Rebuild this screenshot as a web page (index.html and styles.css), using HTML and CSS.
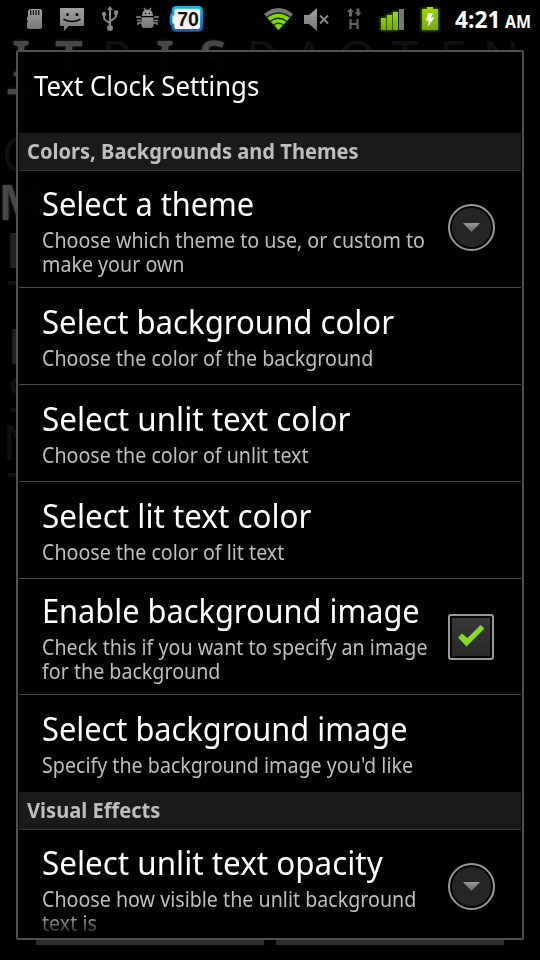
FILE: index.html
```
<!DOCTYPE html>
<html lang="en">
<head>
<meta charset="utf-8">
<title>Text Clock Settings</title>
<link rel="stylesheet" href="styles.css">
</head>
<body>
<div class="screen">
  <div class="wallpaper" aria-hidden="true">
    <div class="letters"><b>I</b><b>T</b><i>R</i><b>I</b><b>S</b><i>P</i><i>A</i><i>O</i><i>T</i><i>E</i><i>N</i></div>
    <div class="letters"><b>T</b><i>W</i><i>E</i><i>N</i><i>T</i><i>Y</i></div>
    <div class="letters"><i>Q</i></div>
    <div class="letters"><b>M</b></div>
    <div class="letters"><b class="dim">P</b></div>
    <div class="letters"><i>T</i></div>
    <div class="letters"><b class="dim">F</b></div>
    <div class="letters"><i>S</i></div>
    <div class="letters"><i>N</i></div>
    <div class="letters"><i>T</i><i></i><i></i><i></i><i></i><i>O</i><i>C</i><i>L</i><i>O</i><i>C</i><i>K</i></div>
  </div>
  <div class="actions"><span></span><span></span></div>

  <header class="status">
    <svg class="icons" width="540" height="38" viewBox="0 0 540 38">
      <defs>
        <linearGradient id="gray" x1="0" y1="0" x2="0" y2="1"><stop offset="0" stop-color="#a0a0a0"/><stop offset="1" stop-color="#777"/></linearGradient>
        <linearGradient id="green" x1="0" y1="0" x2="0" y2="1"><stop offset="0" stop-color="#9bdc00"/><stop offset="1" stop-color="#76a900"/></linearGradient>
        <linearGradient id="blue" x1="0" y1="0" x2="0" y2="1"><stop offset="0" stop-color="#12b4ea"/><stop offset="1" stop-color="#1b5fb0"/></linearGradient>
        <filter id="glow" x="-30%" y="-30%" width="160%" height="160%"><feGaussianBlur stdDeviation="1.5"/></filter>
      </defs>
      <path fill="url(#gray)" d="M30 9h10q2 0 2 2v16q0 2-2 2H29q-2 0-2-2v-4l1-1-1-1v-3l1-2v-5z"/>
      <path stroke="#111" stroke-width="1.3" d="M30.700 10v5M33.400 10v5M36.100 10v5M38.800 10v5"/>
      <path fill="url(#gray)" d="M61 8h22q1 0 1 1v16q0 1-1 1H69l-5 5v-5h-3q-1 0-1-1V9q0-1 1-1z"/>
      <circle cx="67.500" cy="14.500" r="1.500"/><circle cx="77" cy="14.500" r="1.500"/>
      <path d="M63.500 19.200Q72 24 80.500 19.200" fill="none" stroke="#000" stroke-width="1.500"/>
      <g fill="none" stroke="#888" stroke-width="2"><path d="M110 9v18M104 15v3q0 2 6 5M116 13v3q0 2-6 5"/></g>
      <g fill="#888"><path d="M110 6l3 4h-6zM114 10.500h4v4h-4z"/><circle cx="104" cy="14" r="2.200"/><circle cx="110" cy="28" r="3"/></g>
      <path fill="url(#gray)" d="M142 16q0-6.500 5.500-6.500T153 16zM141.500 17.300h12V25q0 3-3 3h-6q-3 0-3-3z"/>
      <path d="M144 8l2 3M151 8l-2 3M138 25v-2h4M157 25v-2h-4M137 18v-1h4M158 18v-1h-4M137 20.500h4M158 20.500h-4" fill="none" stroke="#888" stroke-width="1.400"/>
      <circle cx="145.500" cy="13.500" r=".8"/><circle cx="149.500" cy="13.500" r=".8"/>
      <path fill="#f4f4f4" stroke="url(#blue)" stroke-width="2.800" stroke-linejoin="round" d="M176 7.300h22q3.500 0 3.500 3.500v16q0 3.500-3.500 3.500h-22q-3 0-3-3v-2.500h-1l-1-1.500v-7l1-2h1v-3.500q0-3.500 3-3.500z"/>
      <text class="charge" x="188" y="26" text-anchor="middle">70</text>
      <path fill="#7bc800" opacity=".45" filter="url(#glow)" d="M266 15q12-9 25 0l-12.500 15z"/>
      <path fill="#777" d="M264 14q14.500-12 29 0l-3 3.500q-11.500-9-23 0z"/>
      <path fill="#86d600" d="M267 17.500q11.500-9 23 0L278.500 30z"/>
      <path fill="none" stroke="#163000" stroke-width="1.300" d="M266.500 17.500q12-9 24 0M270 21.500q8.500-6.500 17 0M273.500 25.200q5-4 10 0"/>
      <path fill="url(#gray)" d="M304 15h5l8-7v23l-8-7h-5z"/>
      <path d="M320 15.500l8 8M328 15.500l-8 8" stroke="#888" stroke-width="2"/>
      <path fill="#666" d="M350.500 8l3.500 4h-2v4.500h-3V12h-2zM358 16.500l-3.500-4h2V8.500h3v4h2z"/>
      <path d="M350.500 19v10M357.500 19v10M350.500 24h7" stroke="#666" stroke-width="2"/>
      <path fill="#7bc800" opacity=".45" filter="url(#glow)" d="M380 17h6v-3h6v-3h6v20h-18z"/>
      <path fill="url(#green)" d="M381 18h5v12h-5zM387 15h5v15h-5zM393 12h5v18h-5z"/>
      <path fill="#777" d="M399 9h5v21h-5z"/>
      <path fill="#7bc800" opacity=".55" filter="url(#glow)" d="M421 8h18v23h-18z"/>
      <path fill="url(#green)" d="M427 7h6v2h4q1 0 1 1v19q0 1-1 1h-14q-1 0-1-1V10q0-1 1-1h4z"/>
      <path fill="#fff" d="M428 13h5l-2 4.500h3.500L427.500 27l1.300-6.500H426z"/>
      <text class="clock" x="455" y="28" textLength="45.500" lengthAdjust="spacingAndGlyphs">4:21</text>
      <text class="ampm" x="505" y="28" textLength="26" lengthAdjust="spacingAndGlyphs">AM</text>
    </svg>
  </header>

  <main class="dialog">
    <h1><span>Text Clock Settings</span></h1>
    <div class="list">
      <h2><span>Colors, Backgrounds and Themes</span></h2>
      <section class="row tall">
        <div class="copy"><h3>Select a theme</h3><p>Choose which theme to use, or custom to<br>make your own</p></div>
        <span class="more"></span>
      </section>
      <section class="row"><div class="copy"><h3 class="wide">Select background color</h3><p>Choose the color of the background</p></div></section>
      <section class="row"><div class="copy"><h3 class="wider">Select unlit text color</h3><p>Choose the color of unlit text</p></div></section>
      <section class="row"><div class="copy"><h3 class="wider">Select lit text color</h3><p>Choose the color of lit text</p></div></section>
      <section class="row check">
        <div class="copy"><h3>Enable background image</h3><p>Check this if you want to specify an image<br>for the background</p></div>
        <span class="box"><svg width="28" height="24" viewBox="0 0 28 24"><path d="M1 12.500l4-4 5.500 4.500L23.500 0 27.500 3.500 9.500 21.500z" fill="#86dc1c"/></svg></span>
      </section>
      <section class="row last"><div class="copy"><h3>Select background image</h3><p>Specify the background image you'd like</p></div></section>
      <h2><span>Visual Effects</span></h2>
      <section class="row tall">
        <div class="copy"><h3 class="wider">Select unlit text opacity</h3><p>Choose how visible the unlit background<br>text is</p></div>
        <span class="more"></span>
      </section>
    </div>
  </main>
</div>
</body>
</html>
```
FILE: styles.css
```
* { box-sizing: border-box; }
body { margin: 0; background: #000; font-family: "Noto Sans", sans-serif; color: #fff; }
h1, h2, h3, p { margin: 0; font-weight: 400; white-space: nowrap; }
.screen { position: relative; width: 540px; height: 960px; overflow: hidden; display: flex; flex-direction: column; }
.status { flex: none; height: 38px; position: relative; }
.icons { display: block; }
.icons text { font-weight: 700; fill: #fff; }
.icons .charge { font: 700 19.5px "Liberation Sans", sans-serif; fill: #111; }
.icons .clock { font-size: 24px; }
.icons .ampm { font-size: 17px; }

.wallpaper { position: absolute; left: -3px; top: 33px; }
.letters { display: flex; height: 48px; }
.letters > * { width: 48px; text-align: center; font-size: 49px; line-height: 48px; font-style: normal; font-weight: 400; color: #101010; }
.letters > b { font-weight: 600; color: #484848; text-shadow: 0 0 3px #333; }
.letters > b.dim { color: #222; text-shadow: none; }
.actions { position: absolute; left: 36px; top: 880px; display: flex; gap: 12px; }
.actions span { width: 228px; height: 65px; background: #2c2d2c; }

.dialog { position: relative; flex: none; width: 508px; height: 890px; margin: 12px 16px 0; border: 2px solid #505050; border-radius: 2px; background: rgba(0, 0, 0, .97); padding: 0 1px; display: flex; flex-direction: column; overflow: hidden; }
.dialog::after { content: ""; position: absolute; left: 0; right: 0; bottom: 0; height: 24px; background: linear-gradient(transparent, #000); }
h1 { flex: none; height: 81px; padding-left: 15px; font-size: 27px; line-height: 67px; }
.list { flex: 1; min-height: 0; overflow: hidden; }
h1 span, h2 span, h3, p { display: inline-block; transform-origin: 0 50%; }
h1 span { transform: scaleX(.953); }
h2 { height: 38px; padding-left: 8px; background: #1a1a1a; border-bottom: 1px solid #333; font-size: 21px; line-height: 37px; font-weight: 700; color: #bebebe; }
h2 span { transform: scaleX(.957); }
.row { height: 97px; padding: 11px 26px 0 23px; border-bottom: 1px solid #484848; display: flex; justify-content: space-between; }
.copy { display: flex; flex-direction: column; align-items: flex-start; width: 380px; }
h3 { font-size: 33px; line-height: 46px; transform: scaleX(.932); }
h3.wide { transform: scaleX(.943); }
h3.wider { transform: scaleX(.951); }
p { margin-top: 1px; font-size: 21px; line-height: 24px; color: #bebebe; transform: scaleX(.936); }
.tall { height: 117px; padding-top: 10px; }
.check { height: 116px; padding-top: 9px; padding-right: 27px; }
.last { border-bottom: 0; }
.more { flex: none; width: 47px; height: 47px; margin-top: 23px; border: 2px solid #989898; border-radius: 50%; background: radial-gradient(circle, #252525 0 19px, #000 20px); display: flex; align-items: center; justify-content: center; }
.more::before { content: ""; width: 17px; height: 9px; background: linear-gradient(#999, #666); clip-path: polygon(0 0, 100% 0, 50% 100%); }
.box { flex: none; width: 46px; height: 46px; margin-top: 26px; border: 2px solid #989898; border-radius: 3px; background: linear-gradient(#383838, #292929) content-box, #080808; padding: 2px; display: flex; align-items: center; justify-content: center; }
.box svg { flex: none; }
```
